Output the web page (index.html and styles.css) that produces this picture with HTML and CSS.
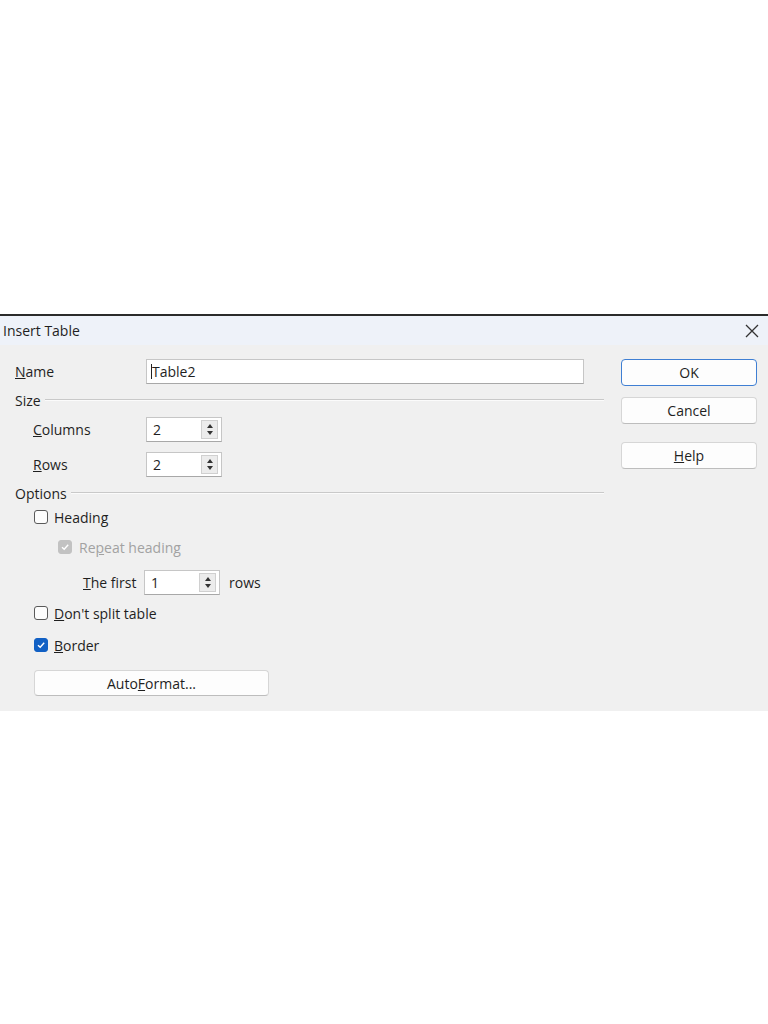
FILE: index.html
```html
<!DOCTYPE html>
<html>
<head>
<meta charset="utf-8">
<link rel="stylesheet" href="styles.css">
</head>
<body>
<div class="dialog">
  <div class="titlebar">
    <span class="title">Insert Table</span>
    <svg class="close" width="14" height="14" viewBox="0 0 14 14"><path d="M1 1 L13 13 M13 1 L1 13" stroke="#333" stroke-width="1.3" fill="none"/></svg>
  </div>
  <div class="body">
    <div class="left">
      <div class="row r-name">
        <span class="label lbl-wide"><u>N</u>ame</span>
        <div class="textbox"><span class="caret"></span>Table2</div>
      </div>
      <div class="row r-size section">
        <span class="label">Size</span><span class="line"></span>
      </div>
      <div class="row r-cols indent1">
        <span class="label lbl-ind"><u>C</u>olumns</span>
        <div class="spin"><span class="val">2</span><span class="spinbtn"><i class="up"></i><i class="dn"></i></span></div>
      </div>
      <div class="row r-rows indent1">
        <span class="label lbl-ind"><u>R</u>ows</span>
        <div class="spin"><span class="val">2</span><span class="spinbtn"><i class="up"></i><i class="dn"></i></span></div>
      </div>
      <div class="row r-opts section">
        <span class="label">Options</span><span class="line"></span>
      </div>
      <div class="row r-head check-row">
        <span class="cb"></span><span class="label">Headin<u>g</u></span>
      </div>
      <div class="row r-rep check-row sub">
        <span class="cb cb-dis"><svg width="10" height="10" viewBox="0 0 10 10"><path d="M2 5.2 L4.2 7.3 L8.2 2.8" stroke="#fff" stroke-width="1.4" fill="none"/></svg></span><span class="label dis">Re<u>p</u>eat heading</span>
      </div>
      <div class="row r-first">
        <span class="label lbl-first"><u>T</u>he first</span>
        <div class="spin"><span class="val">1</span><span class="spinbtn"><i class="up"></i><i class="dn"></i></span></div>
        <span class="label lbl-rows">rows</span>
      </div>
      <div class="row r-split check-row">
        <span class="cb"></span><span class="label"><u>D</u>on't split table</span>
      </div>
      <div class="row r-border check-row">
        <span class="cb cb-on"><svg width="10" height="10" viewBox="0 0 10 10"><path d="M2 5.2 L4.2 7.3 L8.2 2.8" stroke="#fff" stroke-width="1.4" fill="none"/></svg></span><span class="label"><u>B</u>order</span>
      </div>
      <div class="row r-auto">
        <button class="btn btn-auto">Auto<u>F</u>ormat...</button>
      </div>
    </div>
    <div class="right">
      <button class="btn btn-ok">OK</button>
      <button class="btn btn-cancel">Cancel</button>
      <button class="btn btn-help"><u>H</u>elp</button>
    </div>
  </div>
</div>
</body>
</html>
```

FILE: styles.css
```css
html, body {
  margin: 0;
  padding: 0;
  background: #ffffff;
}
body {
  font-family: "Open Sans", "Noto Sans", sans-serif;
  font-size: 14px;
  color: #1f1f1f;
}
.dialog {
  margin-top: 314px;
  width: 768px;
  border-top: 2px solid #2b2b2b;
  background: #f0f0f0;
  box-sizing: border-box;
}
.titlebar {
  height: 29px;
  background: #eef2f9;
  display: flex;
  align-items: center;
  justify-content: space-between;
  padding: 0 9px 0 3px;
}
.title {
  font-size: 14px;
}
.close { display: block; }
.body {
  display: flex;
  padding-bottom: 15px;
}
.left {
  width: 604px;
  padding-left: 15px;
  box-sizing: border-box;
  display: flex;
  flex-direction: column;
}
.row {
  display: flex;
  align-items: center;
}
.label { white-space: nowrap; }
.lbl-wide { width: 131px; }
.lbl-ind { width: 113px; }
.lbl-first { width: 61px; }
.lbl-rows { margin-left: 9px; }
.indent1 { padding-left: 18px; }
.r-name { margin-top: 14px; height: 25px; }
.r-size { margin-top: 8px; height: 16px; }
.r-cols { margin-top: 8px; height: 26px; }
.r-rows { margin-top: 10px; height: 25px; }
.r-opts { margin-top: 8px; height: 16px; }
.r-head { margin-top: 8px; height: 16px; }
.r-rep { margin-top: 14px; height: 16px; }
.r-first { margin-top: 15px; height: 25px; padding-left: 68px; }
.r-split { margin-top: 10px; height: 16px; }
.r-border { margin-top: 16px; height: 16px; }
.r-auto { margin-top: 17px; height: 26px; padding-left: 19px; }

.section .line {
  flex: 1;
  height: 1px;
  background: #c9c9c9;
  border-bottom: 1px solid #fbfbfb;
  margin-left: 4px;
}
.textbox {
  flex: 1;
  margin-right: 20px;
  height: 25px;
  box-sizing: border-box;
  background: #fff;
  border: 1px solid #c6c6c6;
  border-bottom-color: #a8a8a8;
  display: flex;
  align-items: center;
  padding-left: 4px;
}
.caret {
  width: 1px;
  height: 15px;
  background: #222;
}
.spin {
  width: 76px;
  height: 25px;
  box-sizing: border-box;
  background: #fff;
  border: 1px solid #c6c6c6;
  border-bottom-color: #a8a8a8;
  display: flex;
  align-items: center;
  justify-content: space-between;
  padding: 0 3px 0 6px;
}
.spinbtn {
  width: 17px;
  height: 19px;
  background: #ececec;
  border: 1px solid #d0d0d0;
  box-sizing: border-box;
  display: flex;
  flex-direction: column;
  align-items: center;
  justify-content: center;
  gap: 3px;
}
.spinbtn i {
  display: block;
  width: 0;
  height: 0;
  border-left: 3px solid transparent;
  border-right: 3px solid transparent;
}
.spinbtn .up { border-bottom: 4px solid #333; }
.spinbtn .dn { border-top: 4px solid #333; }

.check-row { padding-left: 19px; gap: 6px; }
.check-row.sub { padding-left: 43px; gap: 7px; }
.cb {
  width: 14px;
  height: 14px;
  box-sizing: border-box;
  border: 1px solid #5a5a5a;
  border-radius: 3px;
  background: #fdfdfd;
  display: flex;
  align-items: center;
  justify-content: center;
}
.cb-dis { background: #c2c2c2; border-color: #c2c2c2; }
.cb-on { background: #1160c4; border-color: #1160c4; }
.dis { color: #a2a2a2; }

.btn {
  font-family: inherit;
  font-size: 14px;
  color: #1f1f1f;
  background: #fdfdfd;
  border: 1px solid #d6d6d6;
  border-bottom-color: #bdbdbd;
  border-radius: 4px;
  padding: 0;
  box-sizing: border-box;
}
.btn-auto { width: 235px; height: 26px; }
.right {
  margin-left: 17px;
  padding-top: 14px;
  display: flex;
  flex-direction: column;
  width: 136px;
}
.right .btn { height: 27px; width: 136px; }
.btn-ok { border: 1px solid #3f7fd3; }
.btn-cancel { margin-top: 11px; }
.btn-help { margin-top: 18px; }
```
